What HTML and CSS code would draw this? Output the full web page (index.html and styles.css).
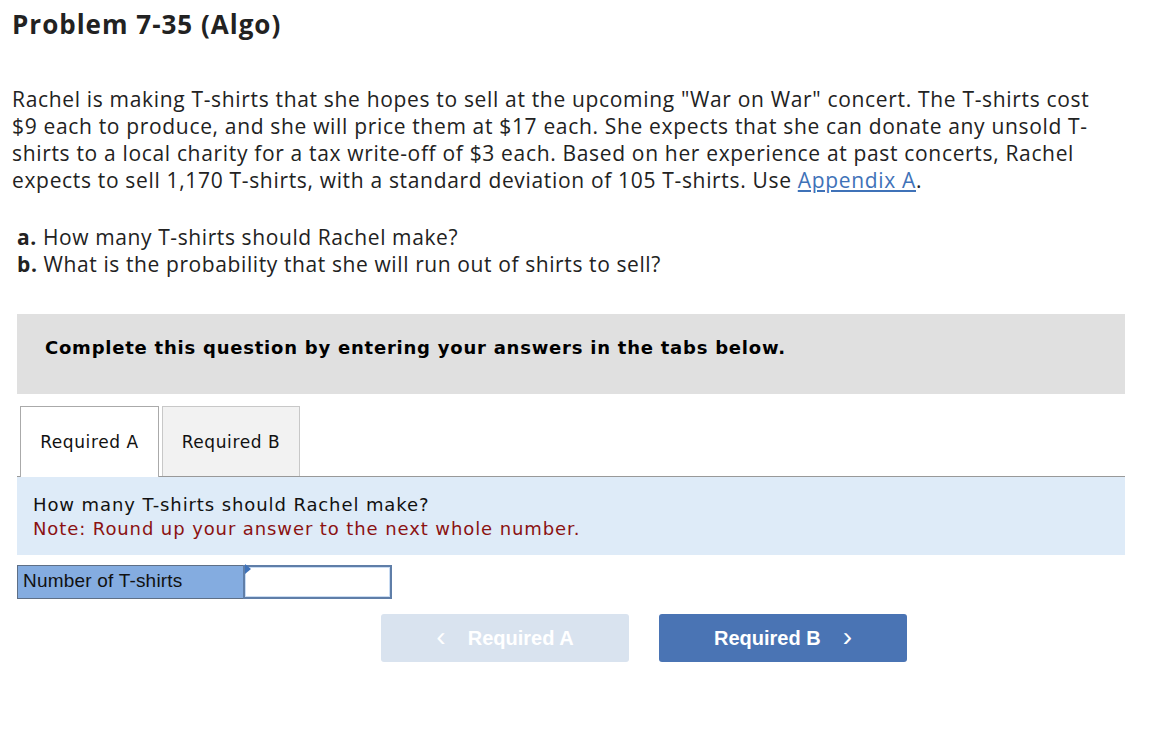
FILE: index.html
```html
<!DOCTYPE html>
<html>
<head>
<meta charset="utf-8">
<link rel="stylesheet" href="styles.css">
</head>
<body>
<div class="page">
  <h1 class="title">Problem 7-35 (Algo)</h1>
  <p class="intro">Rachel is making T-shirts that she hopes to sell at the upcoming "War on War" concert. The T-shirts cost $9 each to produce, and she will price them at $17 each. She expects that she can donate any unsold T-shirts to a local charity for a tax write-off of $3 each. Based on her experience at past concerts, Rachel expects to sell 1,170 T-shirts, with a standard deviation of 105 T-shirts. Use <a class="link" href="#">Appendix A</a>.</p>
  <div class="parts">
    <div><b>a.</b> How many T-shirts should Rachel make?</div>
    <div><b>b.</b> What is the probability that she will run out of shirts to sell?</div>
  </div>
  <div class="notice">Complete this question by entering your answers in the tabs below.</div>
  <div class="tabs">
    <div class="tab active">Required A</div>
    <div class="tab">Required B</div>
  </div>
  <div class="prompt">
    <div>How many T-shirts should Rachel make?</div>
    <div class="note">Note: Round up your answer to the next whole number.</div>
  </div>
  <div class="answer">
    <div class="label">Number of T-shirts</div>
    <div class="input"><span class="flag"></span></div>
  </div>
  <div class="nav">
    <button class="btn prev"><span class="chev">&lsaquo;</span> Required A</button>
    <button class="btn next">Required B <span class="chev">&rsaquo;</span></button>
  </div>
</div>
</body>
</html>
```
FILE: styles.css
```css
html, body { margin: 0; padding: 0; background: #fff; }
.page { padding: 0 31px 0 12px; font-family: "Open Sans", Lato, sans-serif; color: #222; }
.title { margin: 0; padding-top: 8px; font-size: 26px; font-weight: 700; line-height: 32px; letter-spacing: 1px; color: #222; }
.intro { margin: 46px 0 0; max-width: 1098px; font-size: 21px; line-height: 27px; letter-spacing: 0.67px; }
.link { color: #3f72b8; text-decoration: underline; }
.parts { margin: 30px 0 0 5px; font-size: 21px; line-height: 27px; letter-spacing: 0.6px; }
.notice { margin: 36px 0 0 5px; height: 80px; box-sizing: border-box; padding: 23px 28px 0; background: #e0e0e0; font-family: "DejaVu Sans", Verdana, sans-serif; font-weight: 700; font-size: 18px; letter-spacing: 0.77px; color: #000; }
.tabs { margin: 12px 0 0 5px; display: flex; gap: 3px; padding-left: 3px; border-bottom: 1px solid #999; height: 70px; }
.tab { width: 138px; box-sizing: border-box; border: 1px solid #c8c8c8; border-bottom: none; background: #f2f2f2; font-family: "DejaVu Sans", Verdana, sans-serif; font-size: 17px; letter-spacing: 0.6px; color: #111; display: flex; align-items: center; justify-content: center; }
.tab.active { background: #fff; border-color: #aaa; height: 71px; width: 139px; margin-bottom: -1px; }
.prompt { margin-left: 5px; background: #deebf8; height: 78px; box-sizing: border-box; padding: 16px 16px 0; font-family: "DejaVu Sans", Verdana, sans-serif; font-size: 18px; letter-spacing: 0.9px; line-height: 24px; color: #111; }
.note { color: #8b1212; }
.answer { margin: 10px 0 0 5px; display: flex; height: 34px; }
.label { width: 226px; box-sizing: border-box; background: #84ace0; border: 1px solid #5e6f86; border-right: none; font-family: "Liberation Sans", Arial, sans-serif; font-size: 19px; letter-spacing: 0.2px; padding: 4px 0 0 5px; color: #111; }
.input { position: relative; width: 149px; box-sizing: border-box; background: #fff; border: 2px solid #5f7ea8; box-shadow: inset 0 0 0 1px #c9dcf3; }
.flag { position: absolute; left: 0; top: -3px; width: 0; height: 0; border-top: 5px solid transparent; border-bottom: 5px solid transparent; border-left: 6px solid #3f72b8; }
.nav { margin: 15px 0 0; display: flex; gap: 30px; padding-left: 369px; }
.btn { width: 248px; height: 48px; border: none; border-radius: 3px; color: #fff; font-family: "Liberation Sans", Arial, sans-serif; font-weight: 700; font-size: 20px; display: flex; align-items: center; justify-content: center; gap: 22px; letter-spacing: 0; }
.btn.prev { background: #d9e3ef; }
.btn.next { background: #4a74b4; }
.chev { font-size: 28px; font-weight: 400; line-height: 1; margin-top: -3px; }
```
